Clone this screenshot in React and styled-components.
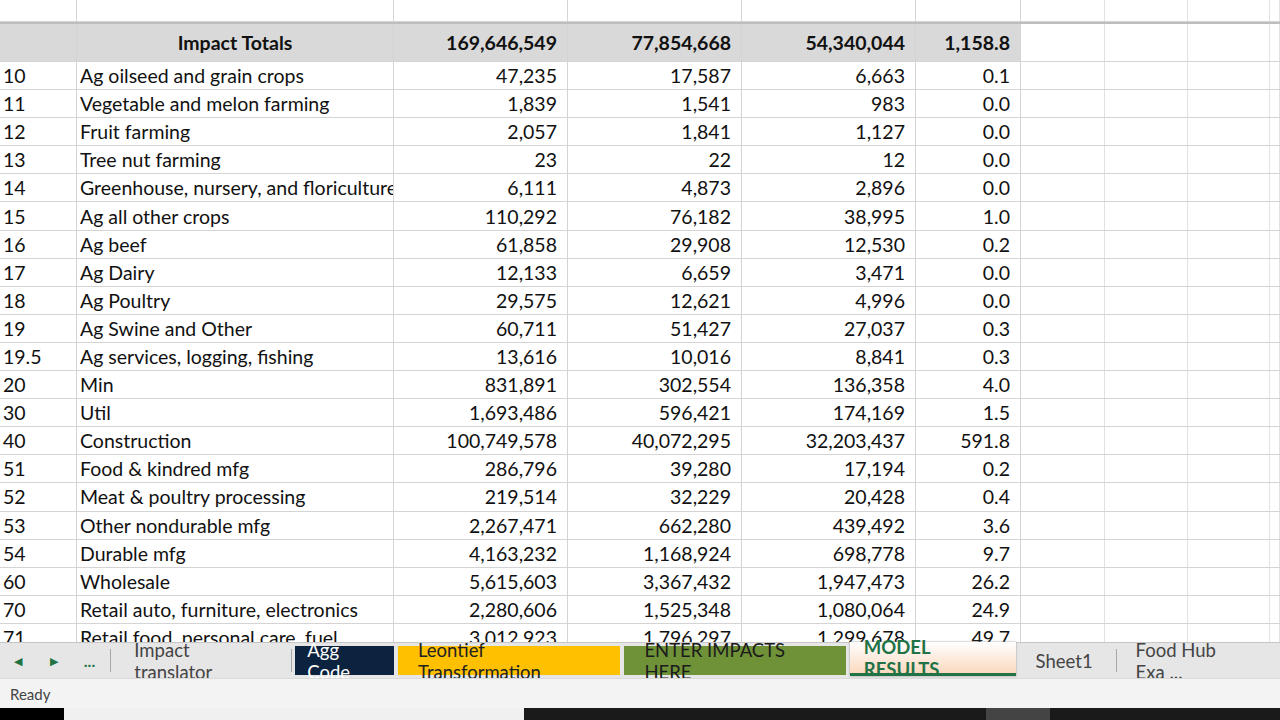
import React from "react";
import styled, { createGlobalStyle } from "styled-components";

const G = createGlobalStyle`
  html,body{margin:0;padding:0;background:#fff;overflow:hidden;}
  *{box-sizing:border-box;}
  body{font-family:Lato,"Open Sans",sans-serif;}
`;
const cols = "77px 317px 174px 174px 174px 105px 84px 83px 82px 10px";
const Page = styled.div`width:1280px;height:720px;display:flex;flex-direction:column;`;
const Sheet = styled.div`height:642px;overflow:hidden;`;
const Row = styled.div`display:grid;grid-template-columns:${cols};height:${p=>p.h}px;
  background:${p=>p.head?"#d9d9d9":"#fff"};border-bottom:1px solid #d4d4d4;
  border-top:${p=>p.head?"2px solid #bdbdbd":"none"};`;
const Cell = styled.div`border-right:1px solid ${p=>p.light?"#e2e2e2":"#d4d4d4"};display:flex;align-items:center;
  justify-content:${p=>p.r?"flex-end":p.c?"center":"flex-start"};padding:0 ${p=>p.r?"10px":"3px"};
  font-size:19.5px;color:#111;font-weight:${p=>p.b?700:400};white-space:nowrap;overflow:hidden;
  background:${p=>p.out?"#fff":"inherit"};`;
const Tabs = styled.div`height:36px;background:#e6e6e6;border-top:1px solid #c6c6c6;display:flex;align-items:stretch;font-size:18.5px;`;
const Tab = styled.div`display:flex;align-items:center;padding:0 ${p=>p.px||20}px;margin:3px 4px 3px 0;
  background:${p=>p.bg||"transparent"};color:${p=>p.fg||"#444"};font-weight:${p=>p.b?700:400};
  ${p=>p.active?"margin:-1px 4px 2px 0;background:linear-gradient(#fff,#fbd9bf);border-bottom:3px solid #217346;color:#217346;box-shadow:0 0 2px #999;":""}`;
const Sep = styled.div`width:1px;margin:6px 3px;background:#a8a8a8;`;
const Nav = styled.div`width:38px;display:flex;align-items:center;justify-content:center;color:#217346;font-size:11px;`;
const Status = styled.div`height:30px;background:#f3f3f3;border-top:1px solid #dadada;display:flex;align-items:center;padding-left:10px;font-size:15px;color:#444;`;
const Task = styled.div`flex:1;background:#111;display:grid;grid-template-columns:64px 460px 462px 64px 1fr;`;
const Seg = styled.div`background:${p=>p.c};`;

const data = [
["10","Ag oilseed and grain crops","47,235","17,587","6,663","0.1"],
["11","Vegetable and melon farming","1,839","1,541","983","0.0"],
["12","Fruit farming","2,057","1,841","1,127","0.0"],
["13","Tree nut farming","23","22","12","0.0"],
["14","Greenhouse, nursery, and floriculture","6,111","4,873","2,896","0.0"],
["15","Ag all other crops","110,292","76,182","38,995","1.0"],
["16","Ag beef","61,858","29,908","12,530","0.2"],
["17","Ag Dairy","12,133","6,659","3,471","0.0"],
["18","Ag Poultry","29,575","12,621","4,996","0.0"],
["19","Ag Swine and Other","60,711","51,427","27,037","0.3"],
["19.5","Ag services, logging, fishing","13,616","10,016","8,841","0.3"],
["20","Min","831,891","302,554","136,358","4.0"],
["30","Util","1,693,486","596,421","174,169","1.5"],
["40","Construction","100,749,578","40,072,295","32,203,437","591.8"],
["51","Food & kindred mfg","286,796","39,280","17,194","0.2"],
["52","Meat & poultry processing","219,514","32,229","20,428","0.4"],
["53","Other nondurable mfg","2,267,471","662,280","439,492","3.6"],
["54","Durable mfg","4,163,232","1,168,924","698,778","9.7"],
["60","Wholesale","5,615,603","3,367,432","1,947,473","26.2"],
["70","Retail auto, furniture, electronics","2,280,606","1,525,348","1,080,064","24.9"],
["71","Retail food, personal care, fuel","3,012,923","1,796,297","1,299,678","49.7"],
];
const Extra = () => <><Cell out light/><Cell out light/><Cell out light/><Cell out light/></>;

export default function App(){
  return <Page><G/>
    <Sheet>
      <Row h={22}>{Array.from({length:6}).map((_,i)=><Cell key={i}/>)}<Extra/></Row>
      <Row h={40} head>
        <Cell/><Cell c b>Impact Totals</Cell><Cell r b>169,646,549</Cell><Cell r b>77,854,668</Cell><Cell r b>54,340,044</Cell><Cell r b>1,158.8</Cell><Extra/>
      </Row>
      {data.map(d=><Row h={28.1} key={d[0]}>
        <Cell>{d[0]}</Cell><Cell>{d[1]}</Cell><Cell r>{d[2]}</Cell><Cell r>{d[3]}</Cell><Cell r>{d[4]}</Cell><Cell r>{d[5]}</Cell><Extra/>
      </Row>)}
    </Sheet>
    <Tabs>
      <Nav>◀</Nav><Nav>▶</Nav><Nav style={{fontSize:16,fontWeight:700}}>...</Nav><Sep/>
      <Tab>Impact translator</Tab><Sep/>
      <Tab bg="#0c2340" fg="#fff" px={12}>Agg Code</Tab>
      <Tab bg="#ffc000" fg="#222">Leontief Transformation</Tab>
      <Tab bg="#6f9238" fg="#1b1b1b">ENTER IMPACTS HERE</Tab>
      <Tab active b px={14}>MODEL RESULTS</Tab>
      <Tab px={16}>Sheet1</Tab><Sep/>
      <Tab px={16}>Food Hub Exa&nbsp;...</Tab>
    </Tabs>
    <Status>Ready</Status>
    <Task><Seg c="#000"/><Seg c="#f0f0f0"/><Seg c="#1a1a1a"/><Seg c="#444"/><Seg c="#1a1a1a"/></Task>
  </Page>;
}
